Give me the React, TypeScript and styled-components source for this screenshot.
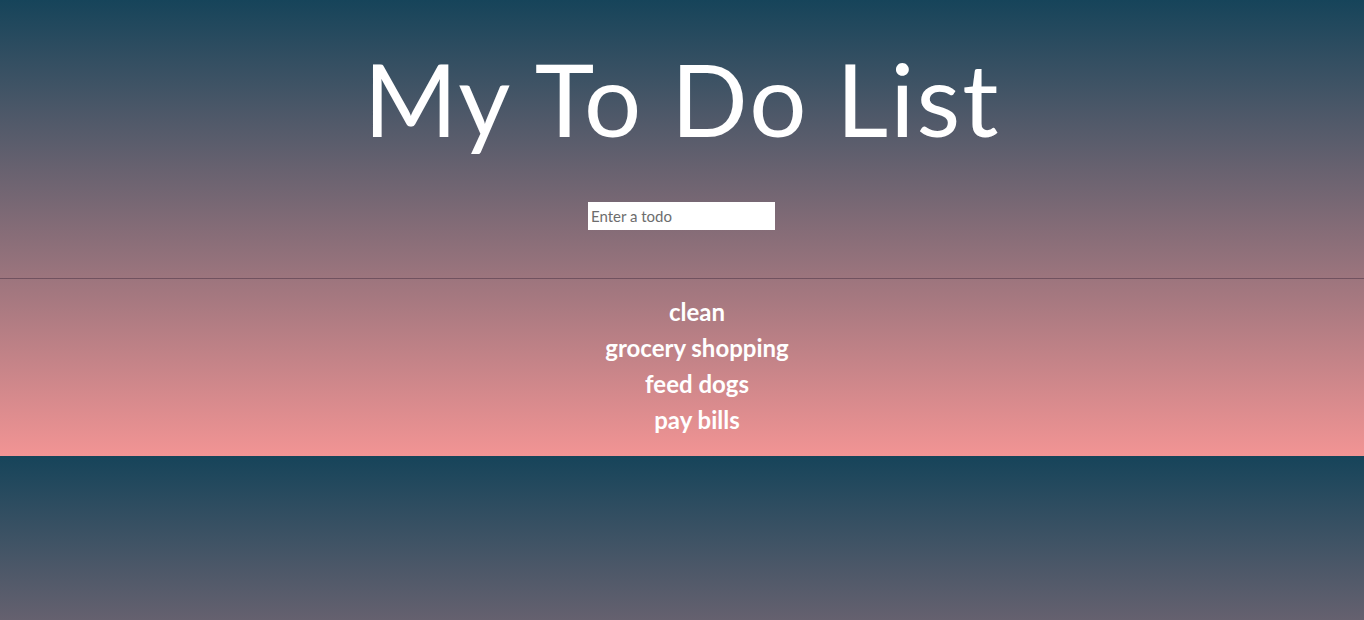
import React, { useState } from "react";
import styled, { createGlobalStyle } from "styled-components";

const GlobalStyle = createGlobalStyle`
  body {
    margin: 0;
    font-family: "Lato", "Liberation Sans", sans-serif;
    background: linear-gradient(to bottom, #16445a 0%, #f29494 100%);
  }
`;

const App = (): JSX.Element => {
  const [todos] = useState<string[]>(["clean", "grocery shopping", "feed dogs", "pay bills"]);
  const [text, setText] = useState("");

  return (
    <>
      <GlobalStyle />
      <Header>
        <Title>My To Do List</Title>
        <TodoInput
          type="text"
          placeholder="Enter a todo"
          value={text}
          onChange={(e) => setText(e.target.value)}
        />
      </Header>
      <List>
        {todos.map((todo) => (
          <Item key={todo}>{todo}</Item>
        ))}
      </List>
    </>
  );
};

export default App;

const Header = styled.div`
  display: flex;
  flex-direction: column;
  align-items: center;
  height: 278px;
  border-bottom: 1px solid rgba(60, 40, 60, 0.45);
`;
const Title = styled.h1`
  margin: 33px 0 0;
  font-family: "Lato", sans-serif;
  font-weight: 400;
  font-size: 101px;
  line-height: 130px;
  letter-spacing: 2px;
  color: #ffffff;
`;
const TodoInput = styled.input`
  margin: 39px 1px 0 0;
  width: 187px;
  height: 28px;
  box-sizing: border-box;
  border: none;
  outline: none;
  padding: 0 3px;
  font-family: "Lato", sans-serif;
  font-size: 15px;
  &::placeholder {
    color: #6d6d6d;
  }
`;
const List = styled.ul`
  margin: 0;
  padding: 15px 0 18px 30px;
  list-style: none;
  text-align: center;
`;
const Item = styled.li`
  font-family: "Lato", sans-serif;
  font-weight: 700;
  font-size: 24px;
  line-height: 36px;
  color: #ffffff;
`;
